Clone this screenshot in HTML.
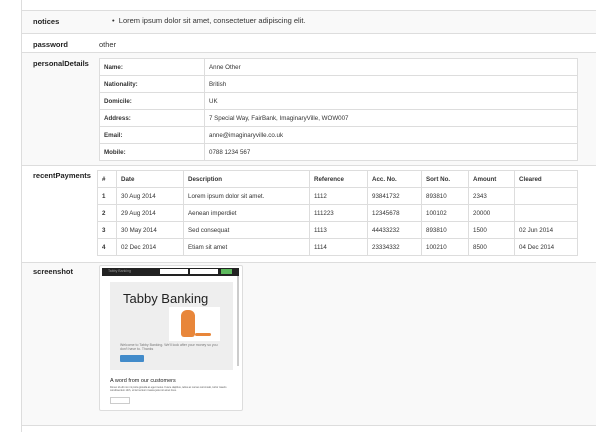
<!DOCTYPE html><html><head><style>
body{margin:0;width:600px;height:432px;background:#fff;font-family:"Liberation Sans",sans-serif;font-size:7px;color:#333;position:relative;overflow:hidden}
.vl{position:absolute;left:21px;top:0;bottom:0;border-left:1px solid #ddd}
.row{position:absolute;left:22px;width:574px;border-top:1px solid #ddd}
.k{position:absolute;left:11px;font-weight:bold;font-size:7.5px;color:#222}
table{position:absolute;border-collapse:collapse;background:#fff;font-size:6.2px}
td{border:1px solid #ddd;padding:0 4px;height:16px}
</style></head><body>
<div class="vl"></div>
<div class="row" style="top:10px;height:23px;background:#f9f9f9"><div class="k" style="top:6px">notices</div><div style="position:absolute;left:90px;top:5px;font-size:7.5px">•&nbsp;&nbsp;Lorem ipsum dolor sit amet, consectetuer adipiscing elit.</div></div>
<div class="row" style="top:33px;height:19px"><div class="k" style="top:6px">password</div><div style="position:absolute;left:77px;top:6px;font-size:7.5px">other</div></div>
<div class="row" style="top:52px;height:113px;background:#f9f9f9"><div class="k" style="top:6px">personalDetails</div>
<table style="left:77px;top:5px;width:479px"><tr><td style="width:96px"><b>Name:</b></td><td>Anne Other</td></tr><tr><td><b>Nationality:</b></td><td>British</td></tr><tr><td><b>Domicile:</b></td><td>UK</td></tr><tr><td><b>Address:</b></td><td>7 Special Way, FairBank, ImaginaryVille, WOW007</td></tr><tr><td><b>Email:</b></td><td>anne@imaginaryville.co.uk</td></tr><tr><td><b>Mobile:</b></td><td>0788 1234 567</td></tr></table></div>
<div class="row" style="top:165px;height:97px"><div class="k" style="top:5px">recentPayments</div>
<table style="left:75px;top:4px;width:481px"><tr style="font-weight:bold"><td style="width:10px">#</td><td style="width:58px">Date</td><td style="width:117px">Description</td><td style="width:49px">Reference</td><td style="width:45px">Acc. No.</td><td style="width:38px">Sort No.</td><td style="width:37px">Amount</td><td>Cleared</td></tr>
<tr><td><b>1</b></td><td>30 Aug 2014</td><td>Lorem ipsum dolor sit amet.</td><td>1112</td><td>93841732</td><td>893810</td><td>2343</td><td></td></tr>
<tr><td><b>2</b></td><td>29 Aug 2014</td><td>Aenean imperdiet</td><td>111223</td><td>12345678</td><td>100102</td><td>20000</td><td></td></tr>
<tr><td><b>3</b></td><td>30 May 2014</td><td>Sed consequat</td><td>1113</td><td>44433232</td><td>893810</td><td>1500</td><td>02 Jun 2014</td></tr>
<tr><td><b>4</b></td><td>02 Dec 2014</td><td>Etiam sit amet</td><td>1114</td><td>23334332</td><td>100210</td><td>8500</td><td>04 Dec 2014</td></tr></table></div>
<div class="row" style="top:262px;height:162px;background:#f9f9f9;border-bottom:1px solid #ddd"><div class="k" style="top:4px">screenshot</div>
<div style="position:absolute;left:77px;top:2px;width:142px;height:144px;background:#fff;border:1px solid #ddd;border-radius:2px;overflow:hidden">
<div style="position:absolute;left:2px;top:2px;width:137px;height:8px;background:#222"><span style="position:absolute;left:6px;top:1px;font-size:3.5px;color:#999">Tabby Banking</span><div style="position:absolute;left:58px;top:1px;width:28px;height:5px;background:#fff"></div><div style="position:absolute;left:88px;top:1px;width:28px;height:5px;background:#fff"></div><div style="position:absolute;left:119px;top:1px;width:11px;height:5px;background:#5cb85c"></div></div>
<div style="position:absolute;left:10px;top:16px;width:123px;height:88px;background:#eee"><div style="position:absolute;left:13px;top:9px;font-size:13px;color:#222">Tabby Banking</div>
<div style="position:absolute;left:59px;top:25px;width:51px;height:34px;background:#fff"><div style="position:absolute;left:12px;top:3px;width:14px;height:27px;background:#e8863a;border-radius:6px 6px 3px 3px"></div><div style="position:absolute;left:26px;top:26px;width:16px;height:3px;background:#e8863a;border-radius:2px"></div></div>
<div style="position:absolute;left:10px;top:61px;width:105px;font-size:3.5px;color:#777">Welcome to Tabby Banking. We'll look after your money so you don't have to. Thanks</div>
<div style="position:absolute;left:10px;top:73px;width:24px;height:7px;background:#428bca;border-radius:1px"></div></div>
<div style="position:absolute;left:10px;top:112px;font-size:5.5px;color:#222">A word from our customers</div>
<div style="position:absolute;left:10px;top:120px;width:125px;height:8px;font-size:2.5px;color:#555;line-height:3px">Donec id elit non mi porta gravida at eget metus. Fusce dapibus, tellus ac cursus commodo, tortor mauris condimentum nibh, ut fermentum massa justo sit amet risus.</div>
<div style="position:absolute;left:10px;top:131px;width:18px;height:5px;border:1px solid #ccc;background:#fff"></div>
<div style="position:absolute;left:137px;top:10px;width:2px;height:90px;background:#ccc"></div>
</div></div>
</body></html>
